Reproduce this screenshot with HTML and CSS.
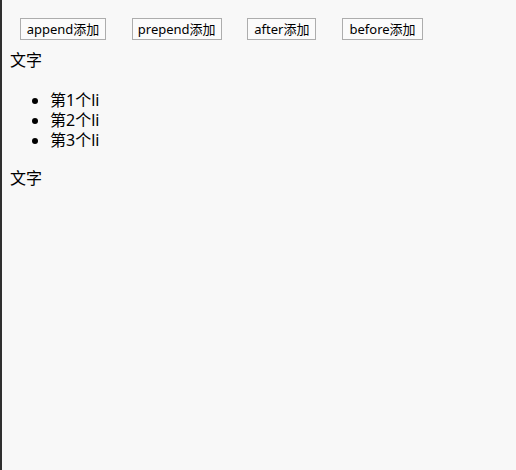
FILE: index.html
```html
<!DOCTYPE html>
<html>
<head>
<meta charset="utf-8">
<link rel="stylesheet" href="styles.css">
</head>
<body>
<div class="frame">
  <div class="toolbar">
    <button class="btn btn-append">append添加</button>
    <button class="btn btn-prepend">prepend添加</button>
    <button class="btn btn-after">after添加</button>
    <button class="btn btn-before">before添加</button>
  </div>
  <div class="text">文字</div>
  <ul class="list">
    <li>第1个li</li>
    <li>第2个li</li>
    <li>第3个li</li>
  </ul>
  <div class="text">文字</div>
</div>
</body>
</html>
```

FILE: styles.css
```css
html, body {
  margin: 0;
  padding: 0;
  height: 100%;
  background: #f8f8f8;
}
.frame {
  box-sizing: border-box;
  min-height: 100%;
  border-left: 2px solid #2f2f2f;
  padding: 8px;
  font-family: "Noto Sans", "Noto Sans CJK SC", sans-serif;
  font-size: 16px;
  color: #000;
}
.toolbar {
  display: flex;
  padding: 10px 10px 8px;
  gap: 25.7px;
}
.btn {
  box-sizing: border-box;
  height: 22px;
  padding: 0;
  border: 1px solid #adadad;
  background: #fbfbfb;
  font-family: "Noto Sans", "Noto Sans CJK SC", sans-serif;
  font-size: 13px;
  color: #000;
  line-height: 20px;
  text-align: center;
  border-radius: 0;
}
.btn-append { width: 86px; }
.btn-prepend { width: 90px; }
.btn-after { width: 69px; }
.btn-before { width: 81px; }
.text {
  line-height: 24px;
}
.list {
  margin: 18px 0 16px;
  padding-left: 40px;
  line-height: 20px;
}
```
